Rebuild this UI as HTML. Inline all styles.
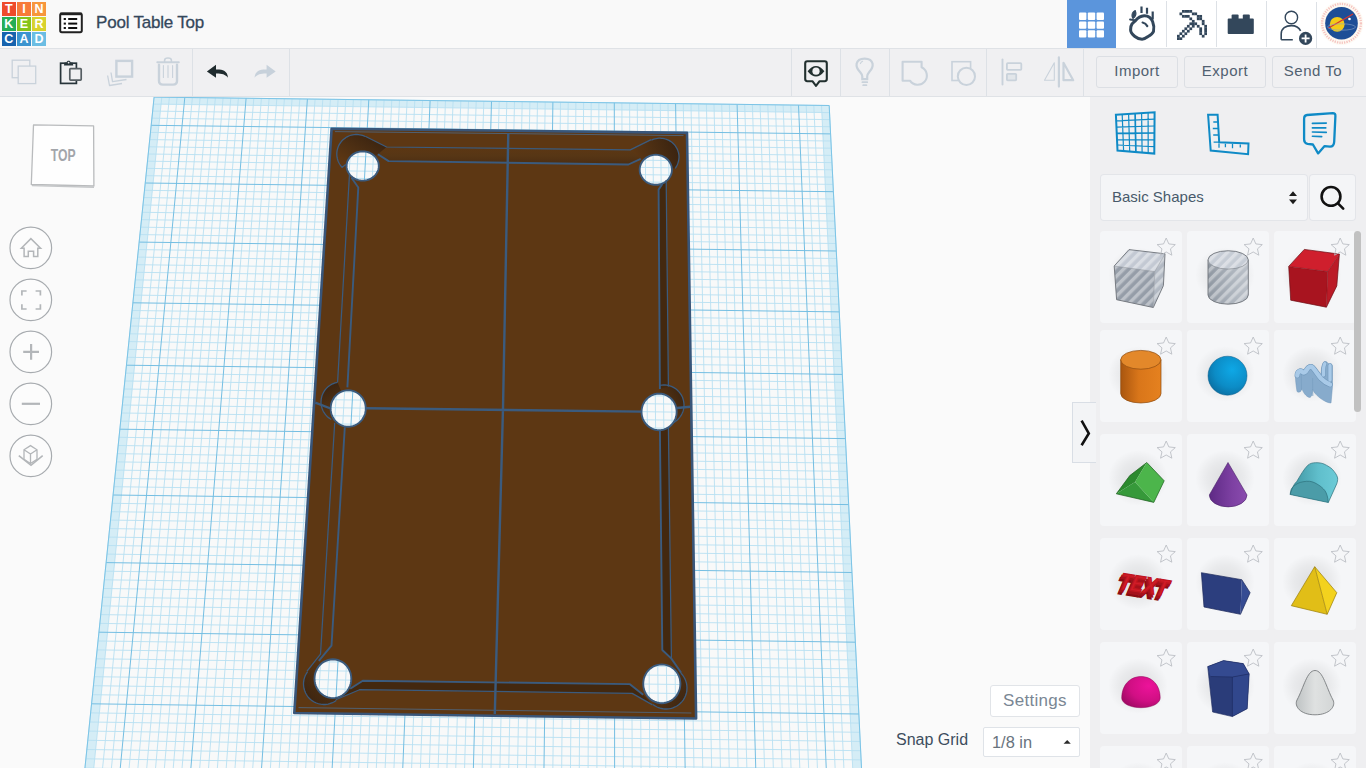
<!DOCTYPE html>
<html><head><meta charset="utf-8">
<style>
*{box-sizing:border-box;margin:0;padding:0}
html,body{width:1366px;height:768px;overflow:hidden;background:#fafafa;font-family:"Liberation Sans",sans-serif}
.a{position:absolute}
#header{position:absolute;left:0;top:0;width:1366px;height:49px;background:#f9f9f9;border-bottom:1px solid #dfe2e6}
#hright{position:absolute;left:1067px;top:0;width:299px;height:48px;background:#fff}
#toolbar{position:absolute;left:0;top:49px;width:1366px;height:48px;background:#f0f0f2;border-bottom:1px solid #dfe2e6}
#viewport{position:absolute;left:0;top:97px;width:1090px;height:671px;background:#fafafa;overflow:hidden}
.grid,.tbl{position:absolute;left:0;top:0}
#panel{position:absolute;left:1090px;top:97px;width:276px;height:671px;background:#efeff1;overflow:hidden}
.title{position:absolute;left:96px;top:13px;font-size:17px;letter-spacing:-0.2px;color:#34475b;-webkit-text-stroke:0.3px #34475b}
.sep{position:absolute;width:1px;background:#dde1e6}
.btn{position:absolute;top:56px;height:32px;width:82px;border:1px solid #dcdfe4;border-radius:3px;background:#f0f0f2;color:#516171;font-size:15px;letter-spacing:0.5px;text-align:center;line-height:28px}
.logo{position:absolute;width:13.6px;height:13.6px;color:#fff;font-weight:bold;font-size:12.5px;line-height:14px;text-align:center}
.tile{position:absolute;width:82px;height:92px;background:#f5f6f8;border-radius:4px}
.tile svg{position:absolute;left:0;top:0}
.circ{position:absolute;left:10px;width:42px;height:42px;border:1px solid #a4a8ac;border-radius:50%}
.circ svg{position:absolute;left:0;top:0}
</style></head><body>
<div id="header">
  <div class="logo" style="left:2px;top:2px;background:#ee4b2b">T</div>
  <div class="logo" style="left:17.1px;top:2px;background:#f77a39">I</div>
  <div class="logo" style="left:32.2px;top:2px;background:#f7963c">N</div>
  <div class="logo" style="left:2px;top:17.1px;background:#24ad57">K</div>
  <div class="logo" style="left:17.1px;top:17.1px;background:#86c41b">E</div>
  <div class="logo" style="left:32.2px;top:17.1px;background:#d8d22c">R</div>
  <div class="logo" style="left:2px;top:32.2px;background:#1663ae">C</div>
  <div class="logo" style="left:17.1px;top:32.2px;background:#3b94cf">A</div>
  <div class="logo" style="left:32.2px;top:32.2px;background:#6bbde3">D</div>
  <svg class="a" style="left:57px;top:10px" width="28" height="26" viewBox="0 0 28 26">
    <rect x="3.2" y="3.6" width="21.6" height="18.6" rx="1.6" fill="#fff" stroke="#222" stroke-width="2"/>
    <rect x="3.2" y="2.6" width="21.6" height="2.6" fill="#222"/>
    <rect x="6.7" y="8" width="2.2" height="2" fill="#111"/><rect x="11.2" y="8" width="9" height="2" fill="#111"/>
    <rect x="6.7" y="12.6" width="2.2" height="2" fill="#111"/><rect x="11.2" y="12.6" width="9" height="2" fill="#111"/>
    <rect x="6.7" y="17" width="2.2" height="2" fill="#111"/><rect x="11.2" y="17" width="9" height="2" fill="#111"/>
  </svg>
  <div class="title">Pool Table Top</div>
  <div id="hright"></div>
  <div class="a" style="left:1067px;top:0;width:49px;height:48px;background:#5b95dc"></div>
  <svg class="a" style="left:1067px;top:0.8px" width="49" height="48" viewBox="0 0 49 48" fill="#fff">
    <rect x="12" y="11.6" width="7.4" height="7.4" rx="1"/><rect x="20.8" y="11.6" width="7.4" height="7.4" rx="1"/><rect x="29.6" y="11.6" width="7.4" height="7.4" rx="1"/>
    <rect x="12" y="20.4" width="7.4" height="7.4" rx="1"/><rect x="20.8" y="20.4" width="7.4" height="7.4" rx="1"/><rect x="29.6" y="20.4" width="7.4" height="7.4" rx="1"/>
    <rect x="12" y="29.2" width="7.4" height="7.4" rx="1"/><rect x="20.8" y="29.2" width="7.4" height="7.4" rx="1"/><rect x="29.6" y="29.2" width="7.4" height="7.4" rx="1"/>
  </svg>
  <div class="sep" style="left:1166px;top:1px;height:46px"></div>
  <div class="sep" style="left:1216px;top:1px;height:46px"></div>
  <div class="sep" style="left:1266px;top:1px;height:46px"></div>
  <div class="sep" style="left:1316px;top:2px;height:46px"></div>
  <!-- apple -->
  <svg class="a" style="left:1124px;top:2px" width="40" height="42" viewBox="0 0 40 42" fill="none" stroke="#33475b" stroke-linecap="round" stroke-linejoin="round">
    <path d="M11.5 18.6 C13.5 16 15.5 14 20.2 13.7 C24 13.6 27 15.5 28.6 19.5 C29.8 22.5 30.2 26.5 29.5 29.5 C28.5 32 26 33.5 24.1 34.5 C22 36 20 37.2 18.1 37.2 C15 37.2 12.5 35.8 10.9 34.5 C8.5 32.5 6.6 30.5 6.6 28 C6.6 25.5 6.8 23.5 8 22 C9 20.5 10.5 19.6 11.5 18.6 Z" stroke-width="3"/>
    <path d="M18.6 20.5 C20.5 21 22.3 22.3 23.3 24.1" stroke-width="2.2"/>
    <path d="M11.2 8.5 C8.5 9.5 7.6 12.5 8.2 14.8 L9 16.4 C11.5 15 12.6 12 11.2 8.5 Z" fill="#33475b" stroke-width="1.2"/>
    <path d="M6 17.5 L11.5 18.3" stroke-width="1.8"/>
    <path d="M17.5 4.6 V11 M23 5.7 V11.8 M28.7 9.5 V17.4" stroke-width="2.2" stroke-linecap="butt"/>
  </svg>
  <!-- pickaxe -->
  <svg class="a" style="left:1177px;top:9.7px" width="30" height="30" viewBox="0 0 30 30" fill="#33475b"><rect x="4.96" y="0.00" width="2.75" height="2.75"/><rect x="7.44" y="0.00" width="2.75" height="2.75"/><rect x="9.92" y="0.00" width="2.75" height="2.75"/><rect x="12.40" y="0.00" width="2.75" height="2.75"/><rect x="2.48" y="2.48" width="2.75" height="2.75"/><rect x="14.88" y="2.48" width="2.75" height="2.75"/><rect x="17.36" y="2.48" width="2.75" height="2.75"/><rect x="4.96" y="4.96" width="2.75" height="2.75"/><rect x="7.44" y="4.96" width="2.75" height="2.75"/><rect x="9.92" y="4.96" width="2.75" height="2.75"/><rect x="19.84" y="4.96" width="2.75" height="2.75"/><rect x="22.32" y="4.96" width="2.75" height="2.75"/><rect x="12.40" y="7.44" width="2.75" height="2.75"/><rect x="19.84" y="7.44" width="2.75" height="2.75"/><rect x="22.32" y="7.44" width="2.75" height="2.75"/><rect x="14.88" y="9.92" width="2.75" height="2.75"/><rect x="24.80" y="9.92" width="2.75" height="2.75"/><rect x="12.40" y="12.40" width="2.75" height="2.75"/><rect x="14.88" y="12.40" width="2.75" height="2.75"/><rect x="17.36" y="12.40" width="2.75" height="2.75"/><rect x="24.80" y="12.40" width="2.75" height="2.75"/><rect x="9.92" y="14.88" width="2.75" height="2.75"/><rect x="14.88" y="14.88" width="2.75" height="2.75"/><rect x="19.84" y="14.88" width="2.75" height="2.75"/><rect x="27.28" y="14.88" width="2.75" height="2.75"/><rect x="7.44" y="17.36" width="2.75" height="2.75"/><rect x="12.40" y="17.36" width="2.75" height="2.75"/><rect x="22.32" y="17.36" width="2.75" height="2.75"/><rect x="27.28" y="17.36" width="2.75" height="2.75"/><rect x="4.96" y="19.84" width="2.75" height="2.75"/><rect x="9.92" y="19.84" width="2.75" height="2.75"/><rect x="22.32" y="19.84" width="2.75" height="2.75"/><rect x="27.28" y="19.84" width="2.75" height="2.75"/><rect x="2.48" y="22.32" width="2.75" height="2.75"/><rect x="7.44" y="22.32" width="2.75" height="2.75"/><rect x="22.32" y="22.32" width="2.75" height="2.75"/><rect x="27.28" y="22.32" width="2.75" height="2.75"/><rect x="0.00" y="24.80" width="2.75" height="2.75"/><rect x="4.96" y="24.80" width="2.75" height="2.75"/><rect x="24.80" y="24.80" width="2.75" height="2.75"/><rect x="0.00" y="27.28" width="2.75" height="2.75"/><rect x="2.48" y="27.28" width="2.75" height="2.75"/></svg>
  <!-- brick -->
  <svg class="a" style="left:1227px;top:14px" width="28" height="21" viewBox="0 0 28 21" fill="#33475b">
    <rect x="4.6" y="0.6" width="7" height="5" rx="1"/><rect x="15.8" y="0.6" width="7" height="5" rx="1"/>
    <rect x="0.7" y="4.5" width="26.1" height="15.5" rx="1"/>
  </svg>
  <!-- user add -->
  <svg class="a" style="left:1276px;top:8px" width="38" height="38" viewBox="0 0 38 38" fill="none" stroke="#33475b">
    <circle cx="15.4" cy="9.5" r="6.2" stroke-width="1.4"/>
    <path d="M5.2 31.8 V26 C5.2 20.5 9.8 17.6 15.4 17.6 C19.8 17.6 23 19.4 24.6 22.8 M5.2 31.8 H16.8" stroke-width="1.6"/>
    <circle cx="29.6" cy="30.4" r="6.6" fill="#33475b" stroke="none"/>
    <path d="M29.6 26.4 V34.4 M25.6 30.4 H33.6" stroke="#fff" stroke-width="1.8"/>
  </svg>
  <!-- avatar -->
  <svg class="a" style="left:1319px;top:1px" width="45" height="45" viewBox="0 0 45 45">
    <circle cx="22.5" cy="22.3" r="21.8" fill="#fefaf4"/>
    <circle cx="22.5" cy="22.3" r="19.4" fill="none" stroke="#f3b7b3" stroke-width="2.4" stroke-dasharray="1.3 1.1" opacity="0.8"/>
    <circle cx="22.5" cy="22.3" r="17" fill="#fcf3ea"/>
    <circle cx="22.5" cy="22.3" r="16.3" fill="#1d4e96"/>
    <circle cx="18.2" cy="23.3" r="7.4" fill="#f3cb18"/>
    <path d="M9.5 27 L34 13" stroke="#d9342e" stroke-width="1.3"/>
    <ellipse cx="22.5" cy="26" rx="14" ry="3.2" fill="none" stroke="#8aa3c8" stroke-width="0.6"/>
    <circle cx="30.5" cy="18" r="1.3" fill="#fff"/>
  </svg>
</div>
<div id="toolbar">
  <div class="sep" style="left:192px;top:0;height:47px"></div>
  <div class="sep" style="left:289px;top:0;height:47px"></div>
  <div class="sep" style="left:791px;top:0;height:47px"></div>
  <div class="sep" style="left:840px;top:0;height:47px"></div>
  <div class="sep" style="left:889px;top:0;height:47px"></div>
  <div class="sep" style="left:986px;top:0;height:47px"></div>
  <div class="sep" style="left:1083px;top:0;height:47px"></div>
</div>
<svg class="a" style="left:0;top:48px" width="1366" height="49" viewBox="0 48 1366 49">
  <g fill="none" stroke="#c9d2db" stroke-width="1.3">
    <rect x="12.2" y="60.2" width="17.6" height="17.5"/>
    <rect x="18.2" y="66.1" width="17.5" height="17.5" fill="#f0f0f2"/>
  </g>
  <rect x="60.6" y="63.2" width="15.8" height="20.2" fill="none" stroke="#27343a" stroke-width="1.7"/>
  <path d="M63.9 65.6 L64.6 62.4 H66.6 C66.6 60.2 70.6 60.2 70.6 62.4 H72.6 L73.3 65.6 Z" fill="#27343a"/><circle cx="68.6" cy="62.6" r="0.9" fill="#f0f0f2"/>
  <rect x="69.8" y="68.7" width="11.4" height="11.4" rx="0.8" fill="#f0f0f2" stroke="#565e63" stroke-width="1.7"/>
  <g fill="none" stroke="#c9d2db" stroke-width="1.3" stroke-linejoin="round">
    <path d="M107.6 75.5 L109.5 85.5 L122 83.5"/>
    <path d="M111 72.5 L112.5 81.7 L126.5 79.5"/>
  </g>
  <rect x="116.4" y="60.9" width="15.7" height="15.7" fill="none" stroke="#c9d2db" stroke-width="2.4"/>
  <g fill="none" stroke="#c9d2db" stroke-linecap="round">
    <path d="M157.3 62.2 H178.8" stroke-width="2"/>
    <path d="M164.6 61.6 V60.2 C164.6 58.6 165.6 58 168 58 C170.4 58 171.4 58.6 171.4 60.2 V61.6" stroke-width="1.6"/>
    <path d="M159 64.8 V81 C159 83.5 160.5 84.6 163 84.6 H173 C175.5 84.6 177 83.5 177 81 V64.8" stroke-width="2.4"/>
    <path d="M163.4 65.5 V77.5 M168 65.5 V77.5 M172.6 65.5 V77.5" stroke-width="1.1"/>
  </g>
  <path d="M206.9 71.4 L216 64.8 V69.5 C222 69.3 227.6 70.5 228 77.7 C225.5 74 221 73.3 216 73.4 V77.7 Z" fill="#1f2b2e"/>
  <path d="M275.7 71.4 L266.6 64.8 V69.5 C260.6 69.3 255 70.5 254.6 77.7 C257.1 74 261.6 73.3 266.6 73.4 V77.7 Z" fill="#c7d1db"/>
  <!-- notes eye -->
  <path d="M807.3 61.3 H824.7 Q826.8 61.3 826.8 63.4 V79.1 Q826.8 81.2 824.7 81.2 H819.6 L816 85.8 L812.4 81.2 H807.3 Q805.2 81.2 805.2 79.1 V63.4 Q805.2 61.3 807.3 61.3 Z" fill="none" stroke="#22302f" stroke-width="2.1" stroke-linejoin="round"/>
  <path d="M807.6 71.2 Q816 60.6 824.4 71.2 Q816 81.8 807.6 71.2 Z" fill="#22302f"/>
  <circle cx="816" cy="71.2" r="3.6" fill="#f0f0f2"/>
  <!-- bulb -->
  <g fill="none" stroke="#c9d2db" stroke-width="2.2" stroke-linecap="round">
    <path d="M862.3 79.2 V76.5 C862.3 74.5 861 73.2 859.6 71.5 C857.3 69 856.2 66.5 856.6 63.8 C857.3 60.5 860.5 58.6 864.6 58.6 C868.7 58.6 871.9 60.5 872.6 63.8 C873 66.5 871.9 69 869.6 71.5 C868.2 73.2 867.2 74.5 867.2 76.5 V79.2 Z"/>
    <path d="M862.4 82.2 H867.2 M863.2 85.2 H866.4" stroke-width="1.8"/>
    <path d="M860.4 63.6 Q861 61.8 862.6 61.2" stroke-width="1.1"/>
  </g>
  <!-- group -->
  <path d="M902.6 61.7 H921.6 V67.3 A9.2 9.2 0 1 1 910 80.7 H902.6 Z" fill="none" stroke="#c9d2db" stroke-width="2.1" stroke-linejoin="round"/>
  <!-- ungroup -->
  <rect x="952" y="61.7" width="18.6" height="18.8" fill="none" stroke="#c9d2db" stroke-width="1.6"/>
  <circle cx="966.4" cy="76.4" r="8.6" fill="#f0f0f2" stroke="#c9d2db" stroke-width="2"/>
  <!-- align -->
  <path d="M1002.5 59.4 V84.6" stroke="#c9d2db" stroke-width="1.9" stroke-linecap="round"/>
  <rect x="1006.9" y="63.2" width="14.4" height="6.6" rx="0.8" fill="none" stroke="#c9d2db" stroke-width="1.8"/>
  <rect x="1006.9" y="73.8" width="9.3" height="6.6" rx="0.8" fill="#e2e6ea" stroke="#c9d2db" stroke-width="1.8"/>
  <!-- mirror -->
  <path d="M1058.9 57.4 V86.6" stroke="#c9d2db" stroke-width="2.2" stroke-linecap="round"/>
  <path d="M1044.5 80.2 L1054.3 62.8 V80.2 Z" fill="none" stroke="#c9d2db" stroke-width="1.1" stroke-linejoin="round"/>
  <path d="M1063.5 62.8 L1073.2 80.2 H1063.5 Z" fill="none" stroke="#c9d2db" stroke-width="2.2" stroke-linejoin="round"/>
</svg>
<div class="btn" style="left:1096px">Import</div>
<div class="btn" style="left:1184px">Export</div>
<div class="btn" style="left:1272px">Send To</div>
<div id="viewport">
<svg class="grid" width="1090" height="671" viewBox="0 97 1090 671">
<path d="M154.1,97.1L829.2,105.5L870,942.3L68.1,931.4Z" fill="#f8f9f9"/>
<path d="M154.1,97.1L829.2,105.5L870,942.3L860.9,942.2L821.8,112.5L161.1,104.2L77.2,931.5L68.1,931.4Z" fill="#d5edf6"/>
<path d="M154.1,97.1L68.1,931.4M161.8,97.1L77.2,931.5M169.4,97.2L86.3,931.6M177.1,97.3L95.4,931.7M192.4,97.5L113.6,932M200.1,97.6L122.7,932.1M207.8,97.7L131.8,932.2M215.4,97.8L140.9,932.4M223.1,97.9L150,932.5M230.8,98L159.1,932.6M238.4,98.1L168.2,932.7M253.8,98.3L186.4,933M261.4,98.4L195.5,933.1M269.1,98.5L204.6,933.2M276.8,98.6L213.7,933.4M284.4,98.7L222.8,933.5M292.1,98.8L232,933.6M299.8,98.9L241.1,933.7M315.1,99.1L259.3,934M322.8,99.2L268.4,934.1M330.4,99.3L277.5,934.2M338.1,99.4L286.6,934.3M345.8,99.5L295.7,934.5M353.4,99.5L304.8,934.6M361.1,99.6L313.9,934.7M376.4,99.8L332.1,935M384.1,99.9L341.3,935.1M391.8,100L350.4,935.2M399.5,100.1L359.5,935.3M407.1,100.2L368.6,935.5M414.8,100.3L377.7,935.6M422.5,100.4L386.8,935.7M437.8,100.6L405,936M445.5,100.7L414.1,936.1M453.1,100.8L423.3,936.2M460.8,100.9L432.4,936.3M468.5,101L441.5,936.5M476.2,101.1L450.6,936.6M483.8,101.2L459.7,936.7M499.2,101.4L477.9,937M506.8,101.5L487,937.1M514.5,101.6L496.2,937.2M522.2,101.7L505.3,937.3M529.9,101.8L514.4,937.5M537.5,101.9L523.5,937.6M545.2,101.9L532.6,937.7M560.5,102.1L550.9,938M568.2,102.2L560,938.1M575.9,102.3L569.1,938.2M583.6,102.4L578.2,938.3M591.2,102.5L587.3,938.5M598.9,102.6L596.4,938.6M606.6,102.7L605.5,938.7M621.9,102.9L623.8,939M629.6,103L632.9,939.1M637.3,103.1L642,939.2M645,103.2L651.1,939.3M652.6,103.3L660.3,939.5M660.3,103.4L669.4,939.6M668,103.5L678.5,939.7M683.3,103.7L696.7,940M691,103.8L705.8,940.1M698.7,103.9L715,940.2M706.4,104L724.1,940.3M714,104.1L733.2,940.5M721.7,104.2L742.3,940.6M729.4,104.3L751.4,940.7M744.7,104.4L769.7,941M752.4,104.5L778.8,941.1M760.1,104.6L787.9,941.2M767.8,104.7L797.1,941.3M775.4,104.8L806.2,941.5M783.1,104.9L815.3,941.6M790.8,105L824.4,941.7M806.2,105.2L842.7,942M813.8,105.3L851.8,942.1M821.5,105.4L860.9,942.2M829.2,105.5L870,942.3M154.1,97.1L829.2,105.5M153.4,104.1L829.5,112.6M152.7,111.1L829.9,119.6M151.9,118.2L830.2,126.7M150.5,132.4L830.9,141M149.7,139.6L831.3,148.2M149,146.8L831.6,155.4M148.2,154L832,162.6M147.5,161.2L832.3,169.8M146.8,168.4L832.7,177.1M146,175.7L833,184.4M144.5,190.3L833.7,199M143.7,197.6L834.1,206.3M143,205L834.5,213.7M142.2,212.3L834.8,221.1M141.5,219.7L835.2,228.6M140.7,227.2L835.6,236M139.9,234.6L835.9,243.5M138.4,249.6L836.7,258.5M137.6,257.1L837,266M136.8,264.7L837.4,273.6M136,272.3L837.8,281.2M135.3,279.9L838.1,288.8M134.5,287.5L838.5,296.5M133.7,295.1L838.9,304.2M132.1,310.5L839.6,319.6M131.3,318.2L840,327.3M130.5,326L840.4,335.1M129.7,333.8L840.8,342.9M128.9,341.6L841.2,350.7M128.1,349.4L841.5,358.6M127.3,357.3L841.9,366.5M125.6,373.1L842.7,382.3M124.8,381L843.1,390.3M124,389L843.5,398.3M123.2,397L843.9,406.3M122.4,405L844.3,414.3M121.5,413L844.7,422.4M120.7,421.1L845,430.5M119,437.3L845.8,446.8M118.2,445.5L846.2,454.9M117.3,453.7L846.6,463.2M116.5,461.9L847,471.4M115.6,470.1L847.4,479.7M114.8,478.4L847.9,487.9M113.9,486.7L848.3,496.3M112.2,503.3L849.1,513M111.3,511.7L849.5,521.4M110.5,520.1L849.9,529.8M109.6,528.6L850.3,538.3M108.7,537.1L850.7,546.8M107.9,545.5L851.1,555.3M107,554.1L851.6,563.9M105.2,571.2L852.4,581.1M104.3,579.8L852.8,589.7M103.4,588.5L853.2,598.4M102.5,597.2L853.7,607.1M101.6,605.9L854.1,615.8M100.7,614.6L854.5,624.6M99.8,623.4L855,633.4M98,641L855.8,651.1M97.1,649.9L856.3,660M96.2,658.8L856.7,668.9M95.3,667.7L857.1,677.9M94.3,676.7L857.6,686.9M93.4,685.7L858,695.9M92.5,694.7L858.4,704.9M90.6,712.9L859.3,723.1M89.7,722L859.8,732.3M88.7,731.1L860.2,741.5M87.8,740.3L860.7,750.7M86.8,749.5L861.1,759.9M85.9,758.8L861.6,769.2M84.9,768.1L862,778.5M83,786.8L863,797.3M82,796.2L863.4,806.7M81,805.6L863.9,816.2M80.1,815L864.3,825.7M79.1,824.5L864.8,835.2M78.1,834.1L865.3,844.7M77.1,843.6L865.7,854.3M75.1,862.9L866.7,873.6M74.1,872.6L867.2,883.3M73.1,882.3L867.6,893.1M72.1,892L868.1,902.9M71.1,901.8L868.6,912.7M70.1,911.6L869.1,922.5M69.1,921.5L869.6,932.4" stroke="#b8e0f2" stroke-width="0.9" fill="none"/>
<path d="M184.8,97.4L104.5,931.9M246.1,98.2L177.3,932.9M307.4,99L250.2,933.9M368.8,99.7L323,934.8M430.1,100.5L395.9,935.8M491.5,101.3L468.8,936.8M552.9,102L541.7,937.8M614.3,102.8L614.7,938.8M675.6,103.6L687.6,939.8M737.1,104.4L760.6,940.8M798.5,105.1L833.5,941.8M151.2,125.3L830.6,133.9M145.3,183L833.4,191.7M139.2,242.1L836.3,251M132.9,302.8L839.3,311.9M126.5,365.2L842.3,374.4M119.9,429.2L845.4,438.6M113.1,495L848.7,504.6M106.1,562.6L852,572.5M98.9,632.2L855.4,642.2M91.5,703.8L858.9,714M83.9,777.4L862.5,787.9M76.1,853.2L866.2,864M68.1,931.4L870,942.3" stroke="#74bee2" stroke-width="1" fill="none"/>
<path d="M154.1,97.1L829.2,105.5L870,942.3L68.1,931.4Z" stroke="#7cc4e6" stroke-width="1" fill="none"/>
</svg>
<svg class="tbl" width="1090" height="671" viewBox="0 97 1090 671"><defs><linearGradient id="gTL" x1="0.85" y1="0.15" x2="0.15" y2="0.85"><stop offset="0" stop-color="#3a2310"/><stop offset="0.55" stop-color="#4d2f13"/><stop offset="1" stop-color="#5d3713"/></linearGradient><linearGradient id="gTR" x1="1" y1="0.4" x2="0.1" y2="0.6"><stop offset="0" stop-color="#3a2310"/><stop offset="0.55" stop-color="#4d2f13"/><stop offset="1" stop-color="#5d3713"/></linearGradient><linearGradient id="gML" x1="0.3" y1="0" x2="0.6" y2="1"><stop offset="0" stop-color="#3a2310"/><stop offset="0.55" stop-color="#4d2f13"/><stop offset="1" stop-color="#5d3713"/></linearGradient><linearGradient id="gMR" x1="1" y1="0.2" x2="0.3" y2="0.9"><stop offset="0" stop-color="#3a2310"/><stop offset="0.55" stop-color="#4d2f13"/><stop offset="1" stop-color="#5d3713"/></linearGradient><linearGradient id="gBL" x1="0.1" y1="1" x2="0.6" y2="0.1"><stop offset="0" stop-color="#3a2310"/><stop offset="0.55" stop-color="#4d2f13"/><stop offset="1" stop-color="#5d3713"/></linearGradient><linearGradient id="gBR" x1="1" y1="1" x2="0.3" y2="0.2"><stop offset="0" stop-color="#3a2310"/><stop offset="0.55" stop-color="#4d2f13"/><stop offset="1" stop-color="#5d3713"/></linearGradient><linearGradient id="gTop" x1="0" y1="0" x2="0" y2="1"><stop offset="0" stop-color="#5d3713"/><stop offset="0.5" stop-color="#573615"/><stop offset="1" stop-color="#4b2d12"/></linearGradient><clipPath id="nh"><path clip-rule="evenodd" d="M0,0H1400V800H0Z M378.8,166 L378.6,168.3 L378,170.5 L377,172.6 L375.7,174.6 L374.1,176.3 L372.2,177.8 L370,179 L367.7,179.9 L365.2,180.4 L362.7,180.6 L360.2,180.4 L357.7,179.9 L355.4,179 L353.2,177.8 L351.3,176.3 L349.7,174.6 L348.4,172.6 L347.4,170.5 L346.8,168.3 L346.6,166 L346.8,163.7 L347.4,161.5 L348.4,159.4 L349.7,157.4 L351.3,155.7 L353.2,154.2 L355.4,153 L357.7,152.1 L360.2,151.6 L362.7,151.4 L365.2,151.6 L367.7,152.1 L370,153 L372.2,154.2 L374.1,155.7 L375.7,157.4 L377,159.4 L378,161.5 L378.6,163.7ZM671.9,169.8 L671.7,172.1 L671.1,174.4 L670.1,176.6 L668.8,178.6 L667.2,180.4 L665.3,181.9 L663.1,183.2 L660.8,184.1 L658.3,184.6 L655.8,184.8 L653.3,184.6 L650.8,184.1 L648.5,183.2 L646.3,181.9 L644.4,180.4 L642.8,178.6 L641.5,176.6 L640.5,174.4 L639.9,172.1 L639.7,169.8 L639.9,167.5 L640.5,165.2 L641.5,163 L642.8,161 L644.4,159.2 L646.3,157.7 L648.5,156.4 L650.8,155.5 L653.3,155 L655.8,154.8 L658.3,155 L660.8,155.5 L663.1,156.4 L665.3,157.7 L667.2,159.2 L668.8,161 L670.1,163 L671.1,165.2 L671.7,167.5ZM365.8,408.5 L365.6,411.4 L364.9,414.2 L363.9,416.8 L362.4,419.3 L360.6,421.4 L358.5,423.3 L356.2,424.8 L353.6,425.9 L351,426.6 L348.2,426.8 L345.4,426.6 L342.8,425.9 L340.2,424.8 L337.9,423.3 L335.8,421.4 L334,419.3 L332.5,416.8 L331.5,414.2 L330.8,411.4 L330.6,408.5 L330.8,405.6 L331.5,402.8 L332.5,400.2 L334,397.7 L335.8,395.6 L337.9,393.7 L340.2,392.2 L342.8,391.1 L345.4,390.4 L348.2,390.2 L351,390.4 L353.6,391.1 L356.2,392.2 L358.5,393.7 L360.6,395.6 L362.4,397.7 L363.9,400.2 L364.9,402.8 L365.6,405.6ZM676.7,411.9 L676.5,414.8 L675.8,417.6 L674.8,420.2 L673.3,422.7 L671.5,424.8 L669.4,426.7 L667.1,428.2 L664.5,429.3 L661.9,430 L659.1,430.2 L656.3,430 L653.7,429.3 L651.1,428.2 L648.8,426.7 L646.7,424.8 L644.9,422.7 L643.4,420.2 L642.4,417.6 L641.7,414.8 L641.5,411.9 L641.7,409 L642.4,406.2 L643.4,403.6 L644.9,401.1 L646.7,399 L648.8,397.1 L651.1,395.6 L653.7,394.5 L656.3,393.8 L659.1,393.6 L661.9,393.8 L664.5,394.5 L667.1,395.6 L669.4,397.1 L671.5,399 L673.3,401.1 L674.8,403.6 L675.8,406.2 L676.5,409ZM351.3,678.7 L351.1,681.7 L350.4,684.7 L349.3,687.5 L347.8,690.1 L345.9,692.4 L343.7,694.4 L341.3,696 L338.6,697.2 L335.8,697.9 L332.9,698.1 L330,697.9 L327.2,697.2 L324.5,696 L322.1,694.4 L319.9,692.4 L318,690.1 L316.5,687.5 L315.4,684.7 L314.7,681.7 L314.5,678.7 L314.7,675.7 L315.4,672.7 L316.5,669.9 L318,667.3 L319.9,665 L322.1,663 L324.5,661.4 L327.2,660.2 L330,659.5 L332.9,659.3 L335.8,659.5 L338.6,660.2 L341.3,661.4 L343.7,663 L345.9,665 L347.8,667.3 L349.3,669.9 L350.4,672.7 L351.1,675.7ZM680.4,683.8 L680.2,686.8 L679.5,689.8 L678.4,692.6 L676.8,695.2 L675,697.5 L672.7,699.5 L670.2,701.1 L667.5,702.3 L664.7,703 L661.8,703.2 L658.9,703 L656.1,702.3 L653.4,701.1 L650.9,699.5 L648.6,697.5 L646.8,695.2 L645.2,692.6 L644.1,689.8 L643.4,686.8 L643.2,683.8 L643.4,680.8 L644.1,677.8 L645.2,675 L646.8,672.4 L648.6,670.1 L650.9,668.1 L653.4,666.5 L656.1,665.3 L658.9,664.6 L661.8,664.4 L664.7,664.6 L667.5,665.3 L670.2,666.5 L672.7,668.1 L675,670.1 L676.8,672.4 L678.4,675 L679.5,677.8 L680.2,680.8Z"/></clipPath></defs><path d="M331.6,128.7 L687,132.9 L696.1,718.5 L294.3,713Z M378.8,166 L378.6,168.3 L378,170.5 L377,172.6 L375.7,174.6 L374.1,176.3 L372.2,177.8 L370,179 L367.7,179.9 L365.2,180.4 L362.7,180.6 L360.2,180.4 L357.7,179.9 L355.4,179 L353.2,177.8 L351.3,176.3 L349.7,174.6 L348.4,172.6 L347.4,170.5 L346.8,168.3 L346.6,166 L346.8,163.7 L347.4,161.5 L348.4,159.4 L349.7,157.4 L351.3,155.7 L353.2,154.2 L355.4,153 L357.7,152.1 L360.2,151.6 L362.7,151.4 L365.2,151.6 L367.7,152.1 L370,153 L372.2,154.2 L374.1,155.7 L375.7,157.4 L377,159.4 L378,161.5 L378.6,163.7ZM671.9,169.8 L671.7,172.1 L671.1,174.4 L670.1,176.6 L668.8,178.6 L667.2,180.4 L665.3,181.9 L663.1,183.2 L660.8,184.1 L658.3,184.6 L655.8,184.8 L653.3,184.6 L650.8,184.1 L648.5,183.2 L646.3,181.9 L644.4,180.4 L642.8,178.6 L641.5,176.6 L640.5,174.4 L639.9,172.1 L639.7,169.8 L639.9,167.5 L640.5,165.2 L641.5,163 L642.8,161 L644.4,159.2 L646.3,157.7 L648.5,156.4 L650.8,155.5 L653.3,155 L655.8,154.8 L658.3,155 L660.8,155.5 L663.1,156.4 L665.3,157.7 L667.2,159.2 L668.8,161 L670.1,163 L671.1,165.2 L671.7,167.5ZM365.8,408.5 L365.6,411.4 L364.9,414.2 L363.9,416.8 L362.4,419.3 L360.6,421.4 L358.5,423.3 L356.2,424.8 L353.6,425.9 L351,426.6 L348.2,426.8 L345.4,426.6 L342.8,425.9 L340.2,424.8 L337.9,423.3 L335.8,421.4 L334,419.3 L332.5,416.8 L331.5,414.2 L330.8,411.4 L330.6,408.5 L330.8,405.6 L331.5,402.8 L332.5,400.2 L334,397.7 L335.8,395.6 L337.9,393.7 L340.2,392.2 L342.8,391.1 L345.4,390.4 L348.2,390.2 L351,390.4 L353.6,391.1 L356.2,392.2 L358.5,393.7 L360.6,395.6 L362.4,397.7 L363.9,400.2 L364.9,402.8 L365.6,405.6ZM676.7,411.9 L676.5,414.8 L675.8,417.6 L674.8,420.2 L673.3,422.7 L671.5,424.8 L669.4,426.7 L667.1,428.2 L664.5,429.3 L661.9,430 L659.1,430.2 L656.3,430 L653.7,429.3 L651.1,428.2 L648.8,426.7 L646.7,424.8 L644.9,422.7 L643.4,420.2 L642.4,417.6 L641.7,414.8 L641.5,411.9 L641.7,409 L642.4,406.2 L643.4,403.6 L644.9,401.1 L646.7,399 L648.8,397.1 L651.1,395.6 L653.7,394.5 L656.3,393.8 L659.1,393.6 L661.9,393.8 L664.5,394.5 L667.1,395.6 L669.4,397.1 L671.5,399 L673.3,401.1 L674.8,403.6 L675.8,406.2 L676.5,409ZM351.3,678.7 L351.1,681.7 L350.4,684.7 L349.3,687.5 L347.8,690.1 L345.9,692.4 L343.7,694.4 L341.3,696 L338.6,697.2 L335.8,697.9 L332.9,698.1 L330,697.9 L327.2,697.2 L324.5,696 L322.1,694.4 L319.9,692.4 L318,690.1 L316.5,687.5 L315.4,684.7 L314.7,681.7 L314.5,678.7 L314.7,675.7 L315.4,672.7 L316.5,669.9 L318,667.3 L319.9,665 L322.1,663 L324.5,661.4 L327.2,660.2 L330,659.5 L332.9,659.3 L335.8,659.5 L338.6,660.2 L341.3,661.4 L343.7,663 L345.9,665 L347.8,667.3 L349.3,669.9 L350.4,672.7 L351.1,675.7ZM680.4,683.8 L680.2,686.8 L679.5,689.8 L678.4,692.6 L676.8,695.2 L675,697.5 L672.7,699.5 L670.2,701.1 L667.5,702.3 L664.7,703 L661.8,703.2 L658.9,703 L656.1,702.3 L653.4,701.1 L650.9,699.5 L648.6,697.5 L646.8,695.2 L645.2,692.6 L644.1,689.8 L643.4,686.8 L643.2,683.8 L643.4,680.8 L644.1,677.8 L645.2,675 L646.8,672.4 L648.6,670.1 L650.9,668.1 L653.4,666.5 L656.1,665.3 L658.9,664.6 L661.8,664.4 L664.7,664.6 L667.5,665.3 L670.2,666.5 L672.7,668.1 L675,670.1 L676.8,672.4 L678.4,675 L679.5,677.8 L680.2,680.8Z" fill="#5d3713" fill-rule="evenodd"/><path d="M345.8,164.5 L342.1,167.3 L341.2,166.3 L340.3,165.1 L339.6,164 L338.9,162.8 L338.3,161.5 L337.8,160.2 L337.4,158.9 L337.1,157.5 L336.9,156.1 L336.8,154.8 L336.8,153.4 L336.9,152 L337.1,150.6 L337.4,149.3 L337.8,147.9 L338.3,146.6 L338.8,145.4 L339.5,144.1 L340.3,143 L341.1,141.9 L342,140.8 L343,139.8 L344,138.9 L345.2,138.1 L346.3,137.3 L347.6,136.6 L348.8,136 L350.1,135.5 L351.5,135.1 L352.8,134.8 L354.2,134.6 L355.6,134.5 L357,134.5 L358.4,134.6 L359.8,134.8 L361.2,135.1 L362.5,135.4 L363.9,135.9 L365.1,136.5 L386.6,147 L388.6,161.1 L377.9,154.3 L362.7,166Z" fill="url(#gTL)" clip-path="url(#nh)"/><path d="M651.4,140.2 L652.6,139.7 L653.8,139.2 L655,138.9 L656.3,138.6 L657.6,138.4 L658.9,138.2 L660.2,138.2 L661.5,138.3 L662.8,138.4 L664.1,138.6 L665.4,139 L666.6,139.4 L667.8,139.9 L669,140.4 L670.1,141.1 L671.2,141.8 L672.2,142.6 L673.2,143.5 L674.1,144.4 L675,145.4 L675.7,146.5 L676.4,147.6 L677.1,148.7 L677.6,149.9 L678,151.1 L678.4,152.3 L678.7,153.6 L678.9,154.9 L679,156.2 L679,157.5 L678.9,158.8 L678.7,160.1 L678.5,161.3 L678.1,162.6 L677.7,163.8 L677.2,165 L676.6,166.1 L675.9,167.3 L675.2,168.3 L656.6,169.4 L640.7,158.8 L628.4,164.5 L630.3,149.9Z" fill="url(#gTR)" clip-path="url(#nh)"/><path d="M331.3,419.5 L330.2,418.8 L329.2,418.1 L328.2,417.4 L327.2,416.5 L326.4,415.6 L325.5,414.7 L324.8,413.7 L324.1,412.6 L323.4,411.5 L322.9,410.4 L322.4,409.2 L321.9,408.1 L321.6,406.8 L321.3,405.6 L321.1,404.4 L321,403.1 L321,401.8 L321.1,400.6 L321.2,399.3 L321.4,398.1 L321.7,396.8 L322,395.6 L322.5,394.5 L323,393.3 L323.6,392.2 L324.2,391.1 L324.9,390.1 L325.7,389.1 L326.6,388.1 L327.5,387.3 L328.4,386.4 L329.4,385.7 L330.5,385 L331.6,384.4 L332.7,383.8 L333.9,383.3 L335.1,382.9 L336.3,382.6 L337.5,382.3 L348.2,408.5Z" fill="url(#gML)" clip-path="url(#nh)"/><path d="M660.2,385.4 L661.8,385.1 L663.4,385 L665,385 L666.7,385.2 L668.3,385.5 L669.8,385.9 L671.4,386.4 L672.9,387.1 L674.3,387.9 L675.7,388.8 L676.9,389.8 L678.1,390.9 L679.2,392.1 L680.2,393.3 L681.1,394.7 L681.9,396.1 L682.6,397.6 L683.1,399.2 L683.5,400.7 L683.8,402.3 L684,404 L684,405.6 L683.9,407.2 L683.6,408.8 L683.3,410.4 L682.8,411.9 L682.1,413.5 L681.4,414.9 L680.5,416.3 L679.5,417.6 L678.5,418.8 L677.3,419.9 L676,421 L674.7,421.9 L673.3,422.7 L671.8,423.4 L670.3,424 L668.7,424.4 L667.1,424.8 L659.1,411.9Z" fill="url(#gMR)" clip-path="url(#nh)"/><path d="M336.3,700.4 L335.1,701.2 L333.8,702 L332.5,702.7 L331.1,703.2 L329.6,703.7 L328.2,704.1 L326.7,704.3 L325.2,704.5 L323.7,704.5 L322.2,704.4 L320.7,704.2 L319.2,703.9 L317.8,703.5 L316.4,703 L315,702.4 L313.7,701.7 L312.4,700.9 L311.2,700 L310,699 L309,698 L308,696.8 L307.1,695.6 L306.3,694.3 L305.6,693 L305,691.6 L304.5,690.2 L304.1,688.8 L303.8,687.3 L303.6,685.8 L303.5,684.3 L303.5,682.8 L303.7,681.3 L303.9,679.8 L304.3,678.4 L304.8,676.9 L305.3,675.5 L306,674.2 L306.8,672.9 L307.6,671.7 L320.5,654.2 L331.5,645.7 L318.8,660.9 L332.9,678.7Z" fill="url(#gBL)" clip-path="url(#nh)"/><path d="M680.8,673.2 L682,674.3 L683,675.6 L683.9,677 L684.7,678.4 L685.4,679.9 L685.9,681.4 L686.4,683 L686.7,684.6 L686.9,686.2 L687,687.8 L686.9,689.5 L686.8,691.1 L686.5,692.7 L686,694.3 L685.5,695.8 L684.8,697.3 L684.1,698.7 L683.2,700.1 L682.2,701.4 L681.1,702.6 L679.9,703.7 L678.7,704.8 L677.3,705.7 L675.9,706.5 L674.4,707.2 L672.9,707.8 L671.4,708.3 L669.8,708.7 L668.2,708.9 L666.5,709 L664.9,709 L663.3,708.8 L661.7,708.5 L660.1,708.2 L658.5,707.6 L657,707 L655.6,706.2 L654.2,705.4 L652.9,704.4 L661.8,683.8 L662.3,650 L671.4,658.4Z" fill="url(#gBR)" clip-path="url(#nh)"/><path d="M386.6,147 L630.3,149.9 L640.7,158.8 L628.4,164.5 L388.6,161.1 L377.9,154.3Z" fill="url(#gTop)"/><path d="M659.9,430.5 L668.4,427.2 L671.4,658.4 L662.3,650Z" fill="#43280f"/><path d="M658.6,189.6 L666.2,180.2 L668.4,386.5 L659.9,389.1Z" fill="#43280f"/><path d="M362.8,680.7 L629.6,684.1 L643.2,694.8 L652.5,704.9 L632.2,693.4 L359.5,689.7 L335.8,699.8 L350.2,688.8Z" fill="#43280f"/><path d="M365.2,136.2 L386.6,147 L630.3,149.9 L651.1,139.6 M349.5,173.8 L337.6,382.3 M334.7,422.9 L320.5,654.2 L307,671.1 M666.2,180.2 L668.4,386.5 M668.4,427.2 L671.4,658.4 M335.8,699.8 L359.5,689.7 L632.2,693.4 L652.5,704.9" fill="none" stroke="#3b5b7e" stroke-width="1.25" stroke-linejoin="round"/><path d="M377.9,154.3 L388.6,161.1 L628.4,164.5 L640.7,158.8 M351.5,177.7 L358.3,187.5 L347.4,387.4 M344.8,427.2 L331.5,645.7 L318.8,660.9 M662.4,183.9 L658.6,189.6 L659.9,389.1 M659.9,430.5 L662.3,650 L671.2,658.4 L681.2,672.8 M350.2,688.8 L362.8,680.7 L629.6,684.1 L643.2,694.8" fill="none" stroke="#3b5b7e" stroke-width="1.9" stroke-linejoin="round"/><path d="M345.8,164.5 L342.1,167.3 L341.2,166.3 L340.3,165.1 L339.6,164 L338.9,162.8 L338.3,161.5 L337.8,160.2 L337.4,158.9 L337.1,157.5 L336.9,156.1 L336.8,154.8 L336.8,153.4 L336.9,152 L337.1,150.6 L337.4,149.3 L337.8,147.9 L338.3,146.6 L338.8,145.4 L339.5,144.1 L340.3,143 L341.1,141.9 L342,140.8 L343,139.8 L344,138.9 L345.2,138.1 L346.3,137.3 L347.6,136.6 L348.8,136 L350.1,135.5 L351.5,135.1 L352.8,134.8 L354.2,134.6 L355.6,134.5 L357,134.5 L358.4,134.6 L359.8,134.8 L361.2,135.1 L362.5,135.4 L363.9,135.9 L365.1,136.5" fill="none" stroke="#3b5b7e" stroke-width="1.3" clip-path="url(#nh)"/><path d="M651.4,140.2 L652.6,139.7 L653.8,139.2 L655,138.9 L656.3,138.6 L657.6,138.4 L658.9,138.2 L660.2,138.2 L661.5,138.3 L662.8,138.4 L664.1,138.6 L665.4,139 L666.6,139.4 L667.8,139.9 L669,140.4 L670.1,141.1 L671.2,141.8 L672.2,142.6 L673.2,143.5 L674.1,144.4 L675,145.4 L675.7,146.5 L676.4,147.6 L677.1,148.7 L677.6,149.9 L678,151.1 L678.4,152.3 L678.7,153.6 L678.9,154.9 L679,156.2 L679,157.5 L678.9,158.8 L678.7,160.1 L678.5,161.3 L678.1,162.6 L677.7,163.8 L677.2,165 L676.6,166.1 L675.9,167.3 L675.2,168.3" fill="none" stroke="#3b5b7e" stroke-width="1.3" clip-path="url(#nh)"/><path d="M331.3,419.5 L330.2,418.8 L329.2,418.1 L328.2,417.4 L327.2,416.5 L326.4,415.6 L325.5,414.7 L324.8,413.7 L324.1,412.6 L323.4,411.5 L322.9,410.4 L322.4,409.2 L321.9,408.1 L321.6,406.8 L321.3,405.6 L321.1,404.4 L321,403.1 L321,401.8 L321.1,400.6 L321.2,399.3 L321.4,398.1 L321.7,396.8 L322,395.6 L322.5,394.5 L323,393.3 L323.6,392.2 L324.2,391.1 L324.9,390.1 L325.7,389.1 L326.6,388.1 L327.5,387.3 L328.4,386.4 L329.4,385.7 L330.5,385 L331.6,384.4 L332.7,383.8 L333.9,383.3 L335.1,382.9 L336.3,382.6 L337.5,382.3" fill="none" stroke="#3b5b7e" stroke-width="1.3" clip-path="url(#nh)"/><path d="M660.2,385.4 L661.8,385.1 L663.4,385 L665,385 L666.7,385.2 L668.3,385.5 L669.8,385.9 L671.4,386.4 L672.9,387.1 L674.3,387.9 L675.7,388.8 L676.9,389.8 L678.1,390.9 L679.2,392.1 L680.2,393.3 L681.1,394.7 L681.9,396.1 L682.6,397.6 L683.1,399.2 L683.5,400.7 L683.8,402.3 L684,404 L684,405.6 L683.9,407.2 L683.6,408.8 L683.3,410.4 L682.8,411.9 L682.1,413.5 L681.4,414.9 L680.5,416.3 L679.5,417.6 L678.5,418.8 L677.3,419.9 L676,421 L674.7,421.9 L673.3,422.7 L671.8,423.4 L670.3,424 L668.7,424.4 L667.1,424.8" fill="none" stroke="#3b5b7e" stroke-width="1.3" clip-path="url(#nh)"/><path d="M336.3,700.4 L335.1,701.2 L333.8,702 L332.5,702.7 L331.1,703.2 L329.6,703.7 L328.2,704.1 L326.7,704.3 L325.2,704.5 L323.7,704.5 L322.2,704.4 L320.7,704.2 L319.2,703.9 L317.8,703.5 L316.4,703 L315,702.4 L313.7,701.7 L312.4,700.9 L311.2,700 L310,699 L309,698 L308,696.8 L307.1,695.6 L306.3,694.3 L305.6,693 L305,691.6 L304.5,690.2 L304.1,688.8 L303.8,687.3 L303.6,685.8 L303.5,684.3 L303.5,682.8 L303.7,681.3 L303.9,679.8 L304.3,678.4 L304.8,676.9 L305.3,675.5 L306,674.2 L306.8,672.9 L307.6,671.7" fill="none" stroke="#3b5b7e" stroke-width="1.3" clip-path="url(#nh)"/><path d="M680.8,673.2 L682,674.3 L683,675.6 L683.9,677 L684.7,678.4 L685.4,679.9 L685.9,681.4 L686.4,683 L686.7,684.6 L686.9,686.2 L687,687.8 L686.9,689.5 L686.8,691.1 L686.5,692.7 L686,694.3 L685.5,695.8 L684.8,697.3 L684.1,698.7 L683.2,700.1 L682.2,701.4 L681.1,702.6 L679.9,703.7 L678.7,704.8 L677.3,705.7 L675.9,706.5 L674.4,707.2 L672.9,707.8 L671.4,708.3 L669.8,708.7 L668.2,708.9 L666.5,709 L664.9,709 L663.3,708.8 L661.7,708.5 L660.1,708.2 L658.5,707.6 L657,707 L655.6,706.2 L654.2,705.4 L652.9,704.4" fill="none" stroke="#3b5b7e" stroke-width="1.3" clip-path="url(#nh)"/><path d="M334.9,131.6 L683.5,135.6 M298.5,707.6 L691.4,713" fill="none" stroke="#4d6a88" stroke-width="1" opacity="0.8"/><path d="M508.3,133 L503,408 L494.8,714 M366,408.2 L641.5,411.6 M315.2,402.6 L330.6,408.5 M676.7,408 L690.4,406.8" fill="none" stroke="#3b5b7e" stroke-width="2.4"/><path d="M331.6,128.7 L687,132.9 L696.1,718.5 L294.3,713Z" fill="none" stroke="#39567a" stroke-width="2.6" stroke-linejoin="round"/><path d="M378.8,166 L378.7,167.9 L378.3,169.8 L377.6,171.6 L376.6,173.3 L375.5,174.9 L374.1,176.3 L372.5,177.6 L370.8,178.6 L368.9,179.5 L366.9,180.1 L364.8,180.5 L362.7,180.6 L360.6,180.5 L358.5,180.1 L356.5,179.5 L354.6,178.6 L352.9,177.6 L351.3,176.3 L349.9,174.9 L348.8,173.3 L347.8,171.6 L347.1,169.8 L346.7,167.9 L346.6,166 L346.7,164.1 L347.1,162.2 L347.8,160.4 L348.8,158.7 L349.9,157.1 L351.3,155.7 L352.9,154.4 L354.6,153.4 L356.5,152.5 L358.5,151.9 L360.6,151.5 L362.7,151.4 L364.8,151.5 L366.9,151.9 L368.9,152.5 L370.8,153.4 L372.5,154.4 L374.1,155.7 L375.5,157.1 L376.6,158.7 L377.6,160.4 L378.3,162.2 L378.7,164.1Z" fill="none" stroke="#3b5b7e" stroke-width="1.9"/><path d="M671.9,169.8 L671.8,171.8 L671.4,173.7 L670.7,175.5 L669.7,177.3 L668.6,178.9 L667.2,180.4 L665.6,181.7 L663.8,182.8 L662,183.7 L660,184.3 L657.9,184.7 L655.8,184.8 L653.7,184.7 L651.6,184.3 L649.6,183.7 L647.8,182.8 L646,181.7 L644.4,180.4 L643,178.9 L641.9,177.3 L640.9,175.5 L640.2,173.7 L639.8,171.8 L639.7,169.8 L639.8,167.8 L640.2,165.9 L640.9,164.1 L641.9,162.3 L643,160.7 L644.4,159.2 L646,157.9 L647.8,156.8 L649.6,155.9 L651.6,155.3 L653.7,154.9 L655.8,154.8 L657.9,154.9 L660,155.3 L662,155.9 L663.8,156.8 L665.6,157.9 L667.2,159.2 L668.6,160.7 L669.7,162.3 L670.7,164.1 L671.4,165.9 L671.8,167.8Z" fill="none" stroke="#3b5b7e" stroke-width="1.9"/><path d="M365.8,408.5 L365.6,410.9 L365.2,413.2 L364.5,415.5 L363.4,417.6 L362.2,419.6 L360.6,421.4 L358.9,423 L357,424.3 L354.9,425.4 L352.8,426.2 L350.5,426.6 L348.2,426.8 L345.9,426.6 L343.6,426.2 L341.5,425.4 L339.4,424.3 L337.5,423 L335.8,421.4 L334.2,419.6 L333,417.6 L331.9,415.5 L331.2,413.2 L330.8,410.9 L330.6,408.5 L330.8,406.1 L331.2,403.8 L331.9,401.5 L333,399.4 L334.2,397.4 L335.8,395.6 L337.5,394 L339.4,392.7 L341.5,391.6 L343.6,390.8 L345.9,390.4 L348.2,390.2 L350.5,390.4 L352.8,390.8 L354.9,391.6 L357,392.7 L358.9,394 L360.6,395.6 L362.2,397.4 L363.4,399.3 L364.5,401.5 L365.2,403.8 L365.6,406.1Z" fill="none" stroke="#3b5b7e" stroke-width="1.9"/><path d="M676.7,411.9 L676.5,414.3 L676.1,416.6 L675.4,418.9 L674.3,421 L673.1,423 L671.5,424.8 L669.8,426.4 L667.9,427.7 L665.8,428.8 L663.7,429.6 L661.4,430 L659.1,430.2 L656.8,430 L654.5,429.6 L652.4,428.8 L650.3,427.7 L648.4,426.4 L646.7,424.8 L645.1,423 L643.9,421 L642.8,418.9 L642.1,416.6 L641.7,414.3 L641.5,411.9 L641.7,409.5 L642.1,407.2 L642.8,404.9 L643.9,402.8 L645.1,400.8 L646.7,399 L648.4,397.4 L650.3,396.1 L652.4,395 L654.5,394.2 L656.8,393.8 L659.1,393.6 L661.4,393.8 L663.7,394.2 L665.8,395 L667.9,396.1 L669.8,397.4 L671.5,399 L673.1,400.8 L674.3,402.7 L675.4,404.9 L676.1,407.2 L676.5,409.5Z" fill="none" stroke="#3b5b7e" stroke-width="1.9"/><path d="M351.3,678.7 L351.1,681.2 L350.7,683.7 L349.9,686.1 L348.8,688.4 L347.5,690.5 L345.9,692.4 L344.1,694.1 L342.1,695.5 L339.9,696.6 L337.7,697.4 L335.3,697.9 L332.9,698.1 L330.5,697.9 L328.1,697.4 L325.9,696.6 L323.7,695.5 L321.7,694.1 L319.9,692.4 L318.3,690.5 L317,688.4 L315.9,686.1 L315.1,683.7 L314.7,681.2 L314.5,678.7 L314.7,676.2 L315.1,673.7 L315.9,671.3 L317,669 L318.3,666.9 L319.9,665 L321.7,663.3 L323.7,661.9 L325.9,660.8 L328.1,660 L330.5,659.5 L332.9,659.3 L335.3,659.5 L337.7,660 L339.9,660.8 L342.1,661.9 L344.1,663.3 L345.9,665 L347.5,666.9 L348.8,669 L349.9,671.3 L350.7,673.7 L351.1,676.2Z" fill="none" stroke="#3b5b7e" stroke-width="1.9"/><path d="M680.4,683.8 L680.2,686.3 L679.8,688.8 L679,691.2 L677.9,693.5 L676.6,695.6 L675,697.5 L673.1,699.2 L671.1,700.6 L668.9,701.7 L666.6,702.5 L664.2,703 L661.8,703.2 L659.4,703 L657,702.5 L654.7,701.7 L652.5,700.6 L650.5,699.2 L648.6,697.5 L647,695.6 L645.7,693.5 L644.6,691.2 L643.8,688.8 L643.4,686.3 L643.2,683.8 L643.4,681.3 L643.8,678.8 L644.6,676.4 L645.7,674.1 L647,672 L648.6,670.1 L650.5,668.4 L652.5,667 L654.7,665.9 L657,665.1 L659.4,664.6 L661.8,664.4 L664.2,664.6 L666.6,665.1 L668.9,665.9 L671.1,667 L673.1,668.4 L675,670.1 L676.6,672 L677.9,674.1 L679,676.4 L679.8,678.8 L680.2,681.3Z" fill="none" stroke="#3b5b7e" stroke-width="1.9"/></svg>
</div>
<svg class="a" style="left:0;top:97px" width="110" height="400" viewBox="0 97 110 400">
  <path d="M33.5 124.9 L93.6 125.9 L93.9 186 L31.3 184.5 Z" fill="#fefefe" stroke="#b9bbbd" stroke-width="1.3" stroke-linejoin="round"/>
  <path d="M32 185.6 L94 187.2" stroke="#c4c6c8" stroke-width="1.4"/>
  <text x="50.8" y="161.4" font-family="Liberation Sans" font-weight="bold" font-size="17" fill="#a2a5aa" textLength="24.8" lengthAdjust="spacingAndGlyphs">TOP</text>
  <g fill="#fcfcfc" stroke="#a7abaf" stroke-width="1.2">
    <circle cx="30.8" cy="247.9" r="20.8"/><circle cx="30.8" cy="299.9" r="20.8"/><circle cx="30.8" cy="351.9" r="20.8"/><circle cx="30.8" cy="403.9" r="20.8"/><circle cx="30.8" cy="455.9" r="20.8"/>
  </g>
  <g fill="none" stroke="#b3b6b9" stroke-width="1.5" stroke-linejoin="miter">
    <path d="M21.3 248.3 L30.9 238.6 L40.6 248.3 H37.8 V256.4 H33.6 V251.2 H28.3 V256.4 H24.1 V248.3 Z"/>
    <path d="M21.9 295.6 V291 H26.6 M35.6 291 H40.4 V295.6 M40.4 304.3 V309 H35.6 M26.6 309 H21.9 V304.3" stroke-width="1.7"/>
    <path d="M23.2 351.9 H39 M31.1 344 V359.8" stroke-width="2.2"/>
    <path d="M21.8 403.8 H40" stroke-width="2.2"/>
    <path d="M18.8 455.6 L31 465.3 L42.7 455.6" stroke-width="1.6"/>
    <path d="M24 449.8 L30.5 445.6 L37 449.8 V459.4 L30.5 463.6 L24 459.4 Z M24 449.8 L30.5 454 L37 449.8 M30.5 454 V463.6" stroke-width="1.3"/>
  </g>
</svg>
<div id="panel">
<svg class="a" style="left:0;top:0" width="276" height="130" viewBox="1090 97 276 130">
  <g fill="none" stroke="#0f8ac6">
    <path d="M1115.9 114.8 L1154.6 112.2 L1154.3 153.6 L1117.5 150.6 Z" stroke-width="2"/>
    <path d="M1122.2 114.4 L1123.6 151.1 M1128.6 113.9 L1129.7 151.6 M1141.6 113.1 L1142.1 152.6 M1148.1 112.6 L1148.2 153.1 M1116.4 120.9 L1154.6 119.1 M1116.7 127.1 L1154.5 126 M1117 139.8 L1154.4 139.9 M1117.3 145 L1154.4 146.6" stroke-width="1.2"/>
    <path d="M1135.1 113.5 L1135.9 152.1 M1116.8 133.4 L1154.5 133" stroke-width="1.7"/>
    <path d="M1208.1 114.8 L1217.6 114.8 L1219.2 142.2 L1248.5 143.5 L1248.1 154.2 L1210.7 150.6 Z" stroke-width="2"/>
    <path d="M1213.3 122 H1217.8 M1212.8 128.5 H1218.2 M1213.2 135 H1218.6 M1213.6 142.2 H1219 M1219 143.5 V147.8 M1225.4 143.8 V147.2 M1232.5 144.1 V148.2 M1240.3 144.5 V147.6" stroke-width="1.3"/>
    <path d="M1307 115 L1332.8 113.2 Q1335.6 113.2 1335.4 116 L1334.2 141.6 Q1334 146.5 1330 146.6 L1324.6 146.1 L1318.1 153.4 L1312.9 144.5 L1307.5 143.8 Q1304.1 143 1304.1 139.5 V118.5 Q1304.2 115.2 1307 115 Z" stroke-width="2.3" stroke-linejoin="round"/>
    <path d="M1312.4 123.4 L1326.3 123.1 M1312.4 127.9 H1325.8 M1312.4 132 L1326.3 132.4 M1312.4 136.2 L1321.7 136.6" stroke-width="1.6" stroke-linecap="round"/>
  </g>
</svg>
<div class="a" style="left:11px;top:78px;width:206px;height:45px;background:#f4f5f7;border-radius:3px;box-shadow:0 0 0 1px #e3e5e9"></div>
<div class="a" style="left:22px;top:91px;font-size:15px;color:#485a6b">Basic Shapes</div>
<svg class="a" style="left:196px;top:91.5px" width="14" height="18" viewBox="0 0 14 18" fill="#1c1c1c"><path d="M3 7 L7 2.2 L11 7 Z M3 10.4 L7 15.2 L11 10.4 Z"/></svg>
<div class="a" style="left:220px;top:78px;width:45px;height:45px;background:#f4f5f7;border-radius:3px;box-shadow:0 0 0 1px #e3e5e9"></div>
<svg class="a" style="left:220px;top:78px" width="45" height="45" viewBox="0 0 45 45" fill="none" stroke="#111" stroke-width="2.6" stroke-linecap="round"><circle cx="21" cy="21.4" r="9.4"/><path d="M28 28.4 L33.2 33.6"/></svg>
<svg width="0" height="0" style="position:absolute"><defs>
<radialGradient id="shd"><stop offset="0" stop-color="#000" stop-opacity="0.10"/><stop offset="0.6" stop-color="#000" stop-opacity="0.05"/><stop offset="1" stop-color="#000" stop-opacity="0"/></radialGradient>
<pattern id="stripe" width="7" height="7" patternUnits="userSpaceOnUse" patternTransform="rotate(45)"><rect width="7" height="7" fill="#000" fill-opacity="0"/><rect width="3.4" height="7" fill="#fff" fill-opacity="0.38"/></pattern>
<linearGradient id="orng" x1="0" x2="1"><stop offset="0" stop-color="#a9560f"/><stop offset="0.45" stop-color="#d9761a"/><stop offset="1" stop-color="#e5811f"/></linearGradient>
<radialGradient id="blu" cx="0.62" cy="0.35" r="0.75"><stop offset="0" stop-color="#0ea8e6"/><stop offset="0.6" stop-color="#0c8cc6"/><stop offset="1" stop-color="#0a6a9c"/></radialGradient>
<linearGradient id="purp" x1="0" x2="1"><stop offset="0" stop-color="#5e2a85"/><stop offset="0.6" stop-color="#7d40a2"/><stop offset="1" stop-color="#8a4cae"/></linearGradient>
<radialGradient id="mag" cx="0.7" cy="0.3" r="0.8"><stop offset="0" stop-color="#ec139a"/><stop offset="0.6" stop-color="#d10f84"/><stop offset="1" stop-color="#a30a66"/></radialGradient>
<linearGradient id="wht" x1="0" x2="1"><stop offset="0" stop-color="#bfc3c4"/><stop offset="0.5" stop-color="#dfe1e1"/><stop offset="1" stop-color="#d3d6d6"/></linearGradient>
<linearGradient id="gry" x1="0" x2="1"><stop offset="0" stop-color="#8f97a1"/><stop offset="0.6" stop-color="#adb4bd"/><stop offset="1" stop-color="#bbc1c9"/></linearGradient>
<linearGradient id="teal" x1="0" x2="1" y1="0" y2="0"><stop offset="0" stop-color="#3e929f"/><stop offset="0.6" stop-color="#60bfcc"/><stop offset="1" stop-color="#6ccbd7"/></linearGradient>
</defs></svg><div class="tile" style="left:10px;top:134px"><svg width="82" height="92" viewBox="0 0 82 92"><ellipse cx="38" cy="44" rx="30" ry="28" fill="url(#shd)"/><path d="M14.2 35 L29 18.6 L65 22.8 L54.8 40.6 Z" fill="#c3c9d3"/><path d="M14.2 35 L54.8 40.6 L53.3 76.5 L16.6 68.7 Z" fill="#959da8"/><path d="M54.8 40.6 L65 22.8 L63.4 54.6 L53.3 76.5 Z" fill="#b2b9c3"/>
<path d="M14.2 35 L29 18.6 L65 22.8 L63.4 54.6 L53.3 76.5 L16.6 68.7 Z" fill="url(#stripe)" stroke="#6e7379" stroke-width="0.9" stroke-linejoin="round"/><path d="M14.2 35 L54.8 40.6 L65 22.8 M54.8 40.6 L53.3 76.5" fill="none" stroke="#8d939a" stroke-width="0.5"/><path transform="translate(66.2 15.8) scale(1.15) translate(-66 -14.8)" d="M66 7.2 L68.3 12.3 L73.9 12.9 L69.7 16.6 L70.9 22.1 L66 19.3 L61.1 22.1 L62.3 16.6 L58.1 12.9 L63.7 12.3 Z" fill="none" stroke="#b9bdc2" stroke-width="0.75" stroke-linejoin="round"/></svg></div><div class="tile" style="left:97px;top:134px"><svg width="82" height="92" viewBox="0 0 82 92"><ellipse cx="38" cy="44" rx="30" ry="28" fill="url(#shd)"/><path d="M21 28.9 V64 A20.15 9.15 0 0 0 61.3 64 V28.9 Z" fill="url(#gry)"/><ellipse cx="41.15" cy="28.9" rx="20.15" ry="9.15" fill="#c6ccd5"/>
<path d="M21 28.9 V64 A20.15 9.15 0 0 0 61.3 64 V28.9 A20.15 9.15 0 0 0 21 28.9 Z" fill="url(#stripe)" stroke="#6e7379" stroke-width="0.9"/><path d="M21 28.9 A20.15 9.15 0 0 0 61.3 28.9" fill="none" stroke="#7d8389" stroke-width="0.6"/><path transform="translate(66.2 15.8) scale(1.15) translate(-66 -14.8)" d="M66 7.2 L68.3 12.3 L73.9 12.9 L69.7 16.6 L70.9 22.1 L66 19.3 L61.1 22.1 L62.3 16.6 L58.1 12.9 L63.7 12.3 Z" fill="none" stroke="#b9bdc2" stroke-width="0.75" stroke-linejoin="round"/></svg></div><div class="tile" style="left:184px;top:134px"><svg width="82" height="92" viewBox="0 0 82 92"><ellipse cx="38" cy="44" rx="30" ry="28" fill="url(#shd)"/><path d="M14.7 35.4 L30.3 18.4 L65.4 23.1 L53.7 40.6 Z" fill="#cf1f2d"/><path d="M14.7 35.4 L53.7 40.6 L52.4 76.2 L16.7 69.2 Z" fill="#a8141f"/><path d="M53.7 40.6 L65.4 23.1 L62.8 54.9 L52.4 76.2 Z" fill="#bb1b27"/>
<path d="M14.7 35.4 L30.3 18.4 L65.4 23.1 L62.8 54.9 L52.4 76.2 L16.7 69.2 Z" fill="none" stroke="#6d0e15" stroke-width="0.7" stroke-linejoin="round"/><path d="M14.7 35.4 L53.7 40.6 L65.4 23.1 M53.7 40.6 L52.4 76.2" fill="none" stroke="#7a1018" stroke-width="0.5"/><path transform="translate(66.2 15.8) scale(1.15) translate(-66 -14.8)" d="M66 7.2 L68.3 12.3 L73.9 12.9 L69.7 16.6 L70.9 22.1 L66 19.3 L61.1 22.1 L62.3 16.6 L58.1 12.9 L63.7 12.3 Z" fill="none" stroke="#b9bdc2" stroke-width="0.75" stroke-linejoin="round"/></svg></div><div class="tile" style="left:10px;top:233px"><svg width="82" height="92" viewBox="0 0 82 92"><ellipse cx="38" cy="44" rx="30" ry="28" fill="url(#shd)"/><path d="M20.7 29.8 V63.6 A20.15 9.4 0 0 0 61 63.6 V29.8 Z" fill="url(#orng)" stroke="#8d4b10" stroke-width="0.7"/><ellipse cx="40.85" cy="29.8" rx="20.15" ry="9.4" fill="#e3882a" stroke="#8d4b10" stroke-width="0.7"/><path transform="translate(66.2 15.8) scale(1.15) translate(-66 -14.8)" d="M66 7.2 L68.3 12.3 L73.9 12.9 L69.7 16.6 L70.9 22.1 L66 19.3 L61.1 22.1 L62.3 16.6 L58.1 12.9 L63.7 12.3 Z" fill="none" stroke="#b9bdc2" stroke-width="0.75" stroke-linejoin="round"/></svg></div><div class="tile" style="left:97px;top:233px"><svg width="82" height="92" viewBox="0 0 82 92"><ellipse cx="38" cy="44" rx="30" ry="28" fill="url(#shd)"/><circle cx="40.5" cy="45.7" r="19.5" fill="url(#blu)" stroke="#0a5d8a" stroke-width="0.5"/><path transform="translate(66.2 15.8) scale(1.15) translate(-66 -14.8)" d="M66 7.2 L68.3 12.3 L73.9 12.9 L69.7 16.6 L70.9 22.1 L66 19.3 L61.1 22.1 L62.3 16.6 L58.1 12.9 L63.7 12.3 Z" fill="none" stroke="#b9bdc2" stroke-width="0.75" stroke-linejoin="round"/></svg></div><div class="tile" style="left:184px;top:233px"><svg width="82" height="92" viewBox="0 0 82 92"><ellipse cx="38" cy="44" rx="30" ry="28" fill="url(#shd)"/><path d="M21.4 46 C21.6 41 24 39 27 39.3 C29 39.5 30 40 31 39 C33 35.5 35 34.3 37.5 34.5 C40 35 42 38 44 41.5 L47 46 C47 40 48 34 50 32 C51.5 31 53 31.5 54 33.5 L55.5 34 C57 33.5 58.5 34.5 58.5 36 L58.5 56 C58 62 57.5 68 57 73 C54 73 50 71 46 68 C42 65 39 61 38.5 59 C38.4 63 38 66.5 36 67.5 C33.5 67.5 30 64 28.5 60 C28 58 27.5 59 27 61 C26 62.5 24 62.5 23 61.5 C22 55 21.5 50 21.4 46 Z" fill="#87abcc" stroke="#7097ba" stroke-width="0.5"/>
<path d="M27.2 44 L27.5 60 M38.6 48 L38.8 66" stroke="#7aa0c2" stroke-width="0.8" fill="none"/>
<path d="M23.3 45.5 C23.3 41.5 26.5 40 28.5 42 C30 43.5 31.5 42 33 39.5 C34.5 37 36.5 36 38.5 37.5 C41 40 44 45 47 48.5 C50 51.5 53 53.5 56 54.5" fill="none" stroke="#7097ba" stroke-width="5.4" stroke-linecap="round"/>
<path d="M49.5 45 C49.3 40 49.6 36 50.8 33.8 M56 35.5 V50" fill="none" stroke="#7097ba" stroke-width="4.4" stroke-linecap="round"/>
<path d="M23.3 45.5 C23.3 41.5 26.5 40 28.5 42 C30 43.5 31.5 42 33 39.5 C34.5 37 36.5 36 38.5 37.5 C41 40 44 45 47 48.5 C50 51.5 53 53.5 56 54.5" fill="none" stroke="#a9cae8" stroke-width="4.4" stroke-linecap="round"/>
<path d="M49.5 45 C49.3 40 49.6 36 50.8 33.8 M56 35.5 V50" fill="none" stroke="#a9cae8" stroke-width="3.4" stroke-linecap="round"/><path transform="translate(66.2 15.8) scale(1.15) translate(-66 -14.8)" d="M66 7.2 L68.3 12.3 L73.9 12.9 L69.7 16.6 L70.9 22.1 L66 19.3 L61.1 22.1 L62.3 16.6 L58.1 12.9 L63.7 12.3 Z" fill="none" stroke="#b9bdc2" stroke-width="0.75" stroke-linejoin="round"/></svg></div><div class="tile" style="left:10px;top:337px"><svg width="82" height="92" viewBox="0 0 82 92"><ellipse cx="38" cy="44" rx="30" ry="28" fill="url(#shd)"/><path d="M46.8 28.5 L29.8 41.6 L16.3 59.8 L35 48 Z" fill="#2c8a2e"/><path d="M16.3 59.8 L35 48 L53.8 68.4 Z" fill="#36993a"/><path d="M46.8 28.5 L64.2 46.8 L53.8 68.4 L35 48 Z" fill="#4cb54b"/>
<path d="M46.8 28.5 L29.8 41.6 L16.3 59.8 L53.8 68.4 L64.2 46.8 Z" fill="none" stroke="#1c5e1e" stroke-width="0.7" stroke-linejoin="round"/><path transform="translate(66.2 15.8) scale(1.15) translate(-66 -14.8)" d="M66 7.2 L68.3 12.3 L73.9 12.9 L69.7 16.6 L70.9 22.1 L66 19.3 L61.1 22.1 L62.3 16.6 L58.1 12.9 L63.7 12.3 Z" fill="none" stroke="#b9bdc2" stroke-width="0.75" stroke-linejoin="round"/></svg></div><div class="tile" style="left:97px;top:337px"><svg width="82" height="92" viewBox="0 0 82 92"><ellipse cx="38" cy="44" rx="30" ry="28" fill="url(#shd)"/><path d="M41 28.5 L22.3 61 A18.7 11.8 0 0 0 60 61 Z" fill="url(#purp)" stroke="#4a2168" stroke-width="0.6" stroke-linejoin="round"/><path transform="translate(66.2 15.8) scale(1.15) translate(-66 -14.8)" d="M66 7.2 L68.3 12.3 L73.9 12.9 L69.7 16.6 L70.9 22.1 L66 19.3 L61.1 22.1 L62.3 16.6 L58.1 12.9 L63.7 12.3 Z" fill="none" stroke="#b9bdc2" stroke-width="0.75" stroke-linejoin="round"/></svg></div><div class="tile" style="left:184px;top:337px"><svg width="82" height="92" viewBox="0 0 82 92"><ellipse cx="38" cy="44" rx="30" ry="28" fill="url(#shd)"/><path d="M16.2 60.5 C18 54 20 50 22.9 47.3 C26 42 30 35 33.9 31.2 C36 29.5 38.5 28.7 41.6 28.7 C45 28.7 47.5 29 50 30 C54 32 56.5 33.5 58.5 35.5 C61 38.5 63 41 63.6 43.9 C63.8 46 63.4 48 62.7 49.9 L54.3 68.5 Z" fill="url(#teal)"/>
<path d="M16.2 60.5 C16.5 56 17.5 54 19.5 52.4 C22 50 25.5 48.3 28.9 47.8 C31 47.3 33.5 47.1 35.6 47.3 C39 47.8 41.5 49 44.1 50.7 C47 52.5 49 54.3 50.9 56.6 C52.5 59 54 63 54.3 68.5 Z" fill="#4b9ca8"/>
<path d="M16.2 60.5 C18 54 20 50 22.9 47.3 C26 42 30 35 33.9 31.2 C36 29.5 38.5 28.7 41.6 28.7 C45 28.7 47.5 29 50 30 C54 32 56.5 33.5 58.5 35.5 C61 38.5 63 41 63.6 43.9 C63.8 46 63.4 48 62.7 49.9 L54.3 68.5 Z M16.2 60.5 C16.5 56 17.5 54 19.5 52.4 C22 50 25.5 48.3 28.9 47.8 C31 47.3 33.5 47.1 35.6 47.3 C39 47.8 41.5 49 44.1 50.7 C47 52.5 49 54.3 50.9 56.6 C52.5 59 54 63 54.3 68.5" fill="none" stroke="#2c707b" stroke-width="0.7" stroke-linejoin="round"/><path transform="translate(66.2 15.8) scale(1.15) translate(-66 -14.8)" d="M66 7.2 L68.3 12.3 L73.9 12.9 L69.7 16.6 L70.9 22.1 L66 19.3 L61.1 22.1 L62.3 16.6 L58.1 12.9 L63.7 12.3 Z" fill="none" stroke="#b9bdc2" stroke-width="0.75" stroke-linejoin="round"/></svg></div><div class="tile" style="left:10px;top:441px"><svg width="82" height="92" viewBox="0 0 82 92"><ellipse cx="38" cy="44" rx="30" ry="28" fill="url(#shd)"/><g transform="translate(17 50.5) rotate(9) skewX(-14)" font-family="Liberation Sans" font-weight="bold" font-size="23">
<text x="-1.2" y="4.6" fill="#8a0c13" stroke="#8a0c13" stroke-width="2" textLength="49" lengthAdjust="spacingAndGlyphs">TEXT</text>
<text x="-0.6" y="2.3" fill="#a5111b" stroke="#a5111b" stroke-width="2" textLength="49" lengthAdjust="spacingAndGlyphs">TEXT</text>
<text x="0" y="0" fill="#d21c28" stroke="#c0161f" stroke-width="1.3" textLength="49" lengthAdjust="spacingAndGlyphs">TEXT</text></g><path transform="translate(66.2 15.8) scale(1.15) translate(-66 -14.8)" d="M66 7.2 L68.3 12.3 L73.9 12.9 L69.7 16.6 L70.9 22.1 L66 19.3 L61.1 22.1 L62.3 16.6 L58.1 12.9 L63.7 12.3 Z" fill="none" stroke="#b9bdc2" stroke-width="0.75" stroke-linejoin="round"/></svg></div><div class="tile" style="left:97px;top:441px"><svg width="82" height="92" viewBox="0 0 82 92"><ellipse cx="38" cy="44" rx="30" ry="28" fill="url(#shd)"/><path d="M14.4 34.7 L54.8 41.7 L53.5 76.3 L17 69 Z" fill="#2c3e7e"/><path d="M54.8 41.7 L63.1 54.7 L53.5 76.3 Z" fill="#364c93"/>
<path d="M14.4 34.7 L54.8 41.7 L63.1 54.7 L53.5 76.3 L17 69 Z" fill="none" stroke="#1b285a" stroke-width="0.7" stroke-linejoin="round"/><path transform="translate(66.2 15.8) scale(1.15) translate(-66 -14.8)" d="M66 7.2 L68.3 12.3 L73.9 12.9 L69.7 16.6 L70.9 22.1 L66 19.3 L61.1 22.1 L62.3 16.6 L58.1 12.9 L63.7 12.3 Z" fill="none" stroke="#b9bdc2" stroke-width="0.75" stroke-linejoin="round"/></svg></div><div class="tile" style="left:184px;top:441px"><svg width="82" height="92" viewBox="0 0 82 92"><ellipse cx="38" cy="44" rx="30" ry="28" fill="url(#shd)"/><path d="M40.7 28.7 L17.3 67.7 L53.2 76.3 Z" fill="#e1be17"/><path d="M40.7 28.7 L53.2 76.3 L62.8 54.7 Z" fill="#f3d21e"/>
<path d="M40.7 28.7 L17.3 67.7 L53.2 76.3 L62.8 54.7 Z M40.7 28.7 L53.2 76.3" fill="none" stroke="#9a7d06" stroke-width="0.7" stroke-linejoin="round"/><path transform="translate(66.2 15.8) scale(1.15) translate(-66 -14.8)" d="M66 7.2 L68.3 12.3 L73.9 12.9 L69.7 16.6 L70.9 22.1 L66 19.3 L61.1 22.1 L62.3 16.6 L58.1 12.9 L63.7 12.3 Z" fill="none" stroke="#b9bdc2" stroke-width="0.75" stroke-linejoin="round"/></svg></div><div class="tile" style="left:10px;top:545px"><svg width="82" height="92" viewBox="0 0 82 92"><ellipse cx="38" cy="44" rx="30" ry="28" fill="url(#shd)"/><path d="M21.7 56 C21.7 43 30 34.5 41 34.5 C52 34.5 60.2 43 60.2 56 C60.2 61.5 51.5 65.7 41 65.7 C30.5 65.7 21.7 61.5 21.7 56 Z" fill="url(#mag)" stroke="#8c0858" stroke-width="0.5"/><path transform="translate(66.2 15.8) scale(1.15) translate(-66 -14.8)" d="M66 7.2 L68.3 12.3 L73.9 12.9 L69.7 16.6 L70.9 22.1 L66 19.3 L61.1 22.1 L62.3 16.6 L58.1 12.9 L63.7 12.3 Z" fill="none" stroke="#b9bdc2" stroke-width="0.75" stroke-linejoin="round"/></svg></div><div class="tile" style="left:97px;top:545px"><svg width="82" height="92" viewBox="0 0 82 92"><ellipse cx="38" cy="44" rx="30" ry="28" fill="url(#shd)"/><path d="M20.7 24.6 L36.5 18.6 L56.3 21.6 L62.2 31.9 L60.2 66.7 L45.4 74.6 L25.6 70 Z" fill="#2a3c79"/><path d="M45.4 35 L62.2 31.9 L60.2 66.7 L45.4 74.6 Z" fill="#31478c"/><path d="M20.7 24.6 L36.5 18.6 L56.3 21.6 L62.2 31.9 L45.4 35 L23.6 34.5 Z" fill="#344a90"/>
<path d="M20.7 24.6 L36.5 18.6 L56.3 21.6 L62.2 31.9 L60.2 66.7 L45.4 74.6 L25.6 70 Z M23.6 34.5 L45.4 35 L62.2 31.9 M45.4 35 V74.6" fill="none" stroke="#1b285c" stroke-width="0.6" stroke-linejoin="round"/><path transform="translate(66.2 15.8) scale(1.15) translate(-66 -14.8)" d="M66 7.2 L68.3 12.3 L73.9 12.9 L69.7 16.6 L70.9 22.1 L66 19.3 L61.1 22.1 L62.3 16.6 L58.1 12.9 L63.7 12.3 Z" fill="none" stroke="#b9bdc2" stroke-width="0.75" stroke-linejoin="round"/></svg></div><div class="tile" style="left:184px;top:545px"><svg width="82" height="92" viewBox="0 0 82 92"><ellipse cx="38" cy="44" rx="30" ry="28" fill="url(#shd)"/><path d="M41 28.5 C33 28.5 30 45 23 58 C20 64 26 72.8 41 72.8 C56 72.8 62 64 59 58 C52 45 49 28.5 41 28.5 Z" fill="url(#wht)" stroke="#6c7072" stroke-width="0.8"/><path transform="translate(66.2 15.8) scale(1.15) translate(-66 -14.8)" d="M66 7.2 L68.3 12.3 L73.9 12.9 L69.7 16.6 L70.9 22.1 L66 19.3 L61.1 22.1 L62.3 16.6 L58.1 12.9 L63.7 12.3 Z" fill="none" stroke="#b9bdc2" stroke-width="0.75" stroke-linejoin="round"/></svg></div><div class="tile" style="left:10px;top:649px"><svg width="82" height="92" viewBox="0 0 82 92"><ellipse cx="38" cy="44" rx="30" ry="28" fill="url(#shd)"/><path transform="translate(66.2 15.8) scale(1.15) translate(-66 -14.8)" d="M66 7.2 L68.3 12.3 L73.9 12.9 L69.7 16.6 L70.9 22.1 L66 19.3 L61.1 22.1 L62.3 16.6 L58.1 12.9 L63.7 12.3 Z" fill="none" stroke="#b9bdc2" stroke-width="0.75" stroke-linejoin="round"/></svg></div><div class="tile" style="left:97px;top:649px"><svg width="82" height="92" viewBox="0 0 82 92"><ellipse cx="38" cy="44" rx="30" ry="28" fill="url(#shd)"/><path transform="translate(66.2 15.8) scale(1.15) translate(-66 -14.8)" d="M66 7.2 L68.3 12.3 L73.9 12.9 L69.7 16.6 L70.9 22.1 L66 19.3 L61.1 22.1 L62.3 16.6 L58.1 12.9 L63.7 12.3 Z" fill="none" stroke="#b9bdc2" stroke-width="0.75" stroke-linejoin="round"/></svg></div><div class="tile" style="left:184px;top:649px"><svg width="82" height="92" viewBox="0 0 82 92"><ellipse cx="38" cy="44" rx="30" ry="28" fill="url(#shd)"/><path transform="translate(66.2 15.8) scale(1.15) translate(-66 -14.8)" d="M66 7.2 L68.3 12.3 L73.9 12.9 L69.7 16.6 L70.9 22.1 L66 19.3 L61.1 22.1 L62.3 16.6 L58.1 12.9 L63.7 12.3 Z" fill="none" stroke="#b9bdc2" stroke-width="0.75" stroke-linejoin="round"/></svg></div>
<div class="a" style="left:263.5px;top:134px;width:7.5px;height:181px;background:#c1c1c1;border-radius:4px"></div>
</div>
<div class="a" style="left:1072px;top:402px;width:24px;height:61px;background:#f3f4f6;border:1px solid #d9dee5;border-right:none"></div>
<svg class="a" style="left:1072px;top:402px" width="24" height="61" viewBox="0 0 24 61"><path d="M9.6 18.6 L16.8 31.4 L9.6 43.2" fill="none" stroke="#111" stroke-width="2.6" stroke-linejoin="miter"/></svg>
<div class="a" style="left:990px;top:685px;width:90px;height:32px;background:#fff;border:1px solid #e1e4e8;border-radius:3px;color:#7a8794;font-size:17px;text-align:center;line-height:29px;letter-spacing:0.3px">Settings</div>
<div class="a" style="left:896px;top:731px;font-size:16px;color:#3d4d5e">Snap Grid</div>
<div class="a" style="left:983px;top:727px;width:97px;height:30px;background:#fff;border:1px solid #dfe3e8;border-radius:2px"></div>
<div class="a" style="left:992px;top:733px;font-size:16.4px;color:#68737d">1/8 in</div>
<svg class="a" style="left:1061px;top:737px" width="12" height="10" viewBox="0 0 12 10"><path d="M2.6 6.8 L6.2 3 L9.8 6.8 Z" fill="#2b2b2b"/></svg>

</body></html>
